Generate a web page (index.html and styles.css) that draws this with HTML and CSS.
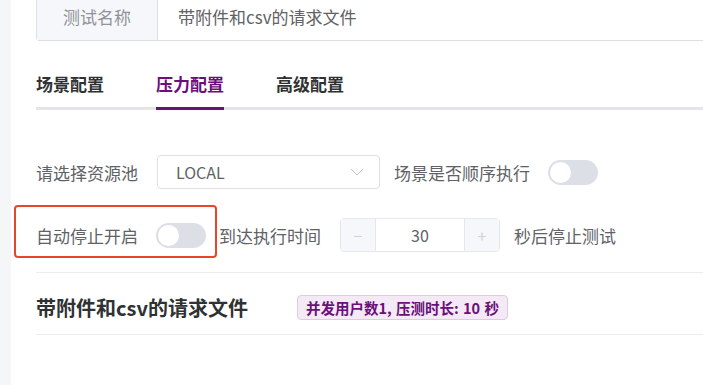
FILE: index.html
```html
<!DOCTYPE html>
<html lang="zh-CN">

<head>
    <meta charset="UTF-8">
    <title>压力配置</title>
    <link rel="stylesheet" href="styles.css">
</head>

<body>
    <div class="panel">
        <div class="name-group">
            <div class="name-label">测试名称</div>
            <div class="name-input">带附件和csv的请求文件</div>
        </div>

        <div class="tabs">
            <div class="tab">场景配置</div>
            <div class="tab active">压力配置</div>
            <div class="tab">高级配置</div>
        </div>

        <div class="form-row row-pool">
            <span class="label label-pool">请选择资源池</span>
            <div class="select">
                <span>LOCAL</span>
                <svg class="arrow" width="14" height="8" viewBox="0 0 14 8">
                    <path d="M1 1 L7 7 L13 1" fill="none" stroke="#c0c4cc" stroke-width="1"/>
                </svg>
            </div>
            <span class="label label-seq">场景是否顺序执行</span>
            <span class="switch"><span class="knob"></span></span>
        </div>

        <div class="form-row row-stop">
            <div class="highlight">
                <span class="label label-auto">自动停止开启</span>
                <span class="switch"><span class="knob"></span></span>
            </div>
            <span class="label shifted label-reach">到达执行时间</span>
            <div class="number shifted">
                <span class="step">&minus;</span>
                <span class="value">30</span>
                <span class="step">+</span>
            </div>
            <span class="label shifted label-after">秒后停止测试</span>
        </div>

        <div class="scenario">
            <span class="scenario-title">带附件和csv的请求文件</span>
            <span class="badge">并发用户数1, 压测时长: 10 秒</span>
        </div>
    </div>
</body>

</html>
```

FILE: styles.css
```css
body {
    margin: 0;
    background: #f5f6f7;
    font-family: "Noto Sans CJK SC", "Noto Sans", sans-serif;
    color: #606266;
}

.panel {
    margin-left: 11px;
    height: 385px;
    background: #fff;
    padding: 0 0 0 25px;
    overflow: hidden;
}

.name-group {
    display: flex;
    height: 48px;
    margin-top: -8px;
    border: 1px solid #dcdfe6;
    border-top: none;
    border-right: none;
    border-radius: 0 0 0 4px;
    font-size: 17px;
}

.name-label {
    width: 121px;
    background: #f5f7fa;
    color: #909399;
    border-right: 1px solid #dcdfe6;
    display: flex;
    align-items: center;
    justify-content: center;
    box-sizing: border-box;
}

.name-input {
    padding-left: 20px;
    display: flex;
    align-items: center;
    color: #606266;
}

.tabs {
    display: flex;
    gap: 52px;
    margin-top: 31px;
    border-bottom: 3px solid #e4e4ec;
}

.tab {
    font-size: 17px;
    font-weight: bold;
    color: #303133;
    line-height: 24px;
    padding-bottom: 11px;
    margin-bottom: -3px;
    border-bottom: 3px solid transparent;
}

.tab.active {
    color: #6b0f7a;
    border-bottom-color: #6b0f7a;
}

.form-row {
    display: flex;
    align-items: center;
    font-size: 17px;
}

.row-pool {
    margin-top: 45px;
    height: 34px;
}

.label {
    color: #606266;
}

.label-pool {
    width: 121px;
}

.select {
    width: 223px;
    height: 34px;
    box-sizing: border-box;
    border: 1px solid #dcdfe6;
    border-radius: 4px;
    display: flex;
    align-items: center;
    justify-content: space-between;
    padding: 0 15px 0 18px;
    font-size: 16px;
    color: #606266;
}

.label-seq {
    margin-left: 14px;
}

.switch {
    display: inline-block;
    width: 50px;
    height: 25px;
    border-radius: 13px;
    background: #dcdfe6;
    position: relative;
    margin-left: 18px;
}

.knob {
    position: absolute;
    top: 2px;
    left: 2px;
    width: 21px;
    height: 21px;
    border-radius: 50%;
    background: #fff;
}

.row-stop {
    margin-top: 16px;
    margin-left: -22px;
    height: 53px;
}

.highlight {
    display: flex;
    align-items: center;
    width: 203px;
    height: 53px;
    box-sizing: border-box;
    border: 2px solid #e8462b;
    border-radius: 4px;
    padding: 7px 0 0 20px;
}

.label-auto {
    width: 120px;
}

.highlight .switch {
    margin-left: 0;
}

.shifted {
    margin-top: 7px;
}

.label-reach {
    margin-left: 2px;
    width: 121px;
}

.number {
    display: flex;
    width: 160px;
    height: 34px;
    box-sizing: border-box;
    border: 1px solid #e4e7ed;
    border-radius: 4px;
    color: #606266;
    font-size: 16px;
}

.step {
    width: 34px;
    background: #f5f7fa;
    color: #d0d3d9;
    display: flex;
    align-items: center;
    justify-content: center;
    font-size: 16px;
}

.step:first-child {
    border-right: 1px solid #e4e7ed;
}

.step:last-child {
    border-left: 1px solid #e4e7ed;
}

.value {
    flex: 1;
    display: flex;
    align-items: center;
    justify-content: center;
}

.label-after {
    margin-left: 14px;
}

.scenario {
    margin-top: 14px;
    border-top: 1px solid #ebebf0;
    border-bottom: 1px solid #ebebf0;
    height: 63px;
    box-sizing: border-box;
    padding-top: 7px;
    display: flex;
    align-items: center;
}

.scenario-title {
    font-size: 20px;
    font-weight: bold;
    color: #303133;
    width: 261px;
}

.badge {
    background: #f3eaf5;
    border: 1px solid #e1c9e5;
    border-radius: 4px;
    color: #6b0f7a;
    font-size: 14.5px;
    font-weight: bold;
    height: 25px;
    line-height: 23px;
    box-sizing: border-box;
    padding: 0 8px;
    word-spacing: 1px;
}
```
